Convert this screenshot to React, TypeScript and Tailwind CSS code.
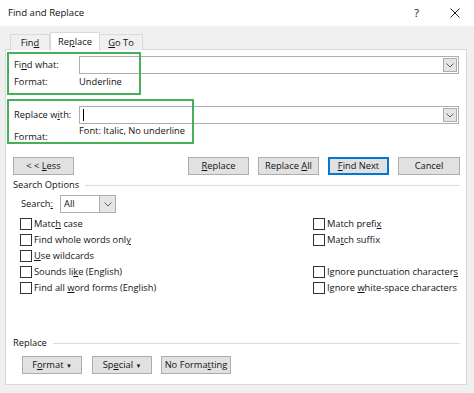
import React from "react";

const Btn = ({ children, w, primary }: { children: React.ReactNode; w: string; primary?: boolean }) => (
  <div
    className={`${w} h-[18px] shrink-0 flex items-center justify-center bg-[#e1e1e1] ${
      primary ? "border-2 border-[#0078d7]" : "border border-[#adadad]"
    } leading-none whitespace-nowrap`}
  >
    <span>{children}</span>
  </div>
);

const Chevron = () => (
  <svg width="8" height="5" viewBox="0 0 8 5" className="block">
    <path d="M0.5 0.5 L4 4 L7.5 0.5" fill="none" stroke="#606060" strokeWidth="1" />
  </svg>
);

const Combo = () => (
  <div className="w-[380px] h-[18px] shrink-0 border border-[#abadb3] bg-white flex justify-end items-center pr-[1px]">
    <div className="w-[14px] h-[14px] bg-[#e5e5e5] border border-[#adadad] flex items-center justify-center">
      <Chevron />
    </div>
  </div>
);

const Check = ({ children }: { children: React.ReactNode }) => (
  <div className="h-[16px] flex items-center gap-[2px] whitespace-nowrap">
    <div className="w-[12px] h-[12px] border border-[#333] bg-white shrink-0" />
    <span className="leading-none">{children}</span>
  </div>
);

export default function App() {
  return (
    <div className="w-[474px] h-[393px] bg-[#f0f0f0] overflow-hidden text-[9.3px] text-[#111] [font-family:'Open_Sans','Noto_Sans',sans-serif] relative whitespace-nowrap">
      {/* Title bar */}
      <div className="h-[26px] bg-white flex items-center pl-[8px] pr-[14px]">
        <span className="text-[9.6px]">Find and Replace</span>
        <span className="ml-auto mr-[31px] text-[11px]">?</span>
        <svg width="10" height="10" viewBox="0 0 10 10">
          <path d="M0.5 0.5 L9.5 9.5 M9.5 0.5 L0.5 9.5" stroke="#222" strokeWidth="1" />
        </svg>
      </div>

      {/* Tabs */}
      <div className="mt-[6px] pl-[10px] flex items-end h-[18px] relative z-10">
        <div className="w-[40px] h-[16px] border border-b-0 border-[#d9d9d9] bg-[#f0f0f0] flex items-center justify-center">
          <span>
            Fin<u>d</u>
          </span>
        </div>
        <div className="w-[50px] h-[19px] border border-b-0 border-[#d9d9d9] bg-white flex items-center justify-center -mb-px">
          <span>
            Re<u>p</u>lace
          </span>
        </div>
        <div className="w-[43px] h-[16px] border border-b-0 border-l-0 border-[#d9d9d9] bg-[#f0f0f0] flex items-center justify-center">
          <span>
            <u>G</u>o To
          </span>
        </div>
      </div>

      {/* Panel */}
      <div className="ml-[5px] w-[462px] h-[336px] -mt-px bg-white border border-[#d9d9d9] flex flex-col pr-[6px]">
        <div className="mt-[6px] flex items-center h-[18px] pl-[8px]">
          <span className="w-[65px] shrink-0">
            Fi<u>n</u>d what:
          </span>
          <Combo />
        </div>
        <div className="flex items-center h-[15px] pl-[8px]">
          <span className="w-[65px] shrink-0">Format:</span>
          <span>Underline</span>
        </div>
        <div className="mt-[17px] flex items-center h-[18px] pl-[8px]">
          <span className="w-[65px] shrink-0">
            Replace w<u>i</u>th:
          </span>
          <div className="w-[380px] h-[18px] shrink-0 border border-[#abadb3] bg-white flex items-center pr-[1px]">
            <div className="ml-[3px] w-px h-[12px] bg-black" />
            <div className="ml-auto w-[14px] h-[14px] bg-[#e5e5e5] border border-[#adadad] flex items-center justify-center">
              <Chevron />
            </div>
          </div>
        </div>
        <div className="flex items-start h-[20px] pl-[8px]">
          <span className="w-[65px] shrink-0 pt-[6px] leading-[14px]">Format:</span>
          <span className="leading-[14px]">Font: Italic, No underline</span>
        </div>

        <div className="mt-[13px] flex items-center pl-[7px]">
          <Btn w="w-[61px]">
            &lt; &lt; <u>L</u>ess
          </Btn>
          <div className="ml-auto flex gap-[9px]">
            <Btn w="w-[61px]">
              <u>R</u>eplace
            </Btn>
            <Btn w="w-[61px]">
              Replace <u>A</u>ll
            </Btn>
            <Btn w="w-[61px]" primary>
              <u>F</u>ind Next
            </Btn>
            <Btn w="w-[62px]">Cancel</Btn>
          </div>
        </div>

        <div className="mt-[3px] flex items-center h-[14px] pl-[7px] gap-[6px]">
          <span>Search Options</span>
          <div className="flex-1 h-px bg-[#dcdcdc]" />
        </div>

        <div className="mt-[3px] flex items-center h-[18px] pl-[15px]">
          <span className="w-[39px] shrink-0">
            Search<u>:</u>
          </span>
          <div className="w-[56px] h-[18px] border border-[#abadb3] bg-white flex items-center">
            <span className="pl-[3px]">All</span>
            <div className="ml-auto w-[16px] h-[16px] bg-[#e5e5e5] border-l border-[#adadad] flex items-center justify-center">
              <Chevron />
            </div>
          </div>
        </div>

        <div className="mt-[3px] grid grid-cols-[293px_1fr] pl-[14px]">
          <div className="flex flex-col">
            <Check>
              Matc<u>h</u> case
            </Check>
            <Check>
              Find whole words onl<u>y</u>
            </Check>
            <Check>
              <u>U</u>se wildcards
            </Check>
            <Check>
              Sounds li<u>k</u>e (English)
            </Check>
            <Check>
              Find all <u>w</u>ord forms (English)
            </Check>
          </div>
          <div className="flex flex-col">
            <Check>
              Match prefi<u>x</u>
            </Check>
            <Check>
              Ma<u>t</u>ch suffix
            </Check>
            <div className="h-[16px]" />
            <Check>
              Ignore punctuation character<u>s</u>
            </Check>
            <Check>
              Ignore <u>w</u>hite-space characters
            </Check>
          </div>
        </div>

        <div className="mt-[40px] flex items-center h-[14px] pl-[7px] gap-[6px]">
          <span>Replace</span>
          <div className="flex-1 h-px bg-[#dcdcdc]" />
        </div>

        <div className="mt-[6px] flex items-center pl-[16px] gap-[10px]">
          <Btn w="w-[60px]">
            F<u>o</u>rmat <span className="text-[6px] align-middle">▼</span>
          </Btn>
          <Btn w="w-[60px]">
            Sp<u>e</u>cial <span className="text-[6px] align-middle">▼</span>
          </Btn>
          <div className="-ml-[1px]">
            <Btn w="w-[70px]">
              No Forma<u>t</u>ting
            </Btn>
          </div>
        </div>
      </div>

      {/* Green highlight overlays */}
      <div className="absolute left-[7px] top-[52px] w-[134px] h-[43px] border-2 border-[#45b05a] pointer-events-none" />
      <div className="absolute left-[7px] top-[99px] w-[187px] h-[45px] border-2 border-[#45b05a] pointer-events-none" />
    </div>
  );
}
